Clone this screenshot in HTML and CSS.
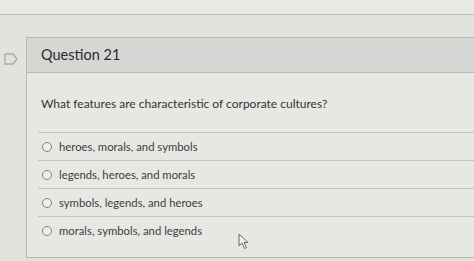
FILE: index.html
```html
<!DOCTYPE html>
<html lang="en">
  <head>
    <meta charset="UTF-8" />
    <title>Question 21</title>
    <link rel="stylesheet" href="styles.css">
  </head>
  <body>
    <div class="prev"></div>
    <div class="question-row">
      <div class="flag">
        <svg width="14" height="12" viewBox="0 0 14 12">
          <path d="M1 1 H9 L13 6 L9 11 H1 Z" fill="none" stroke="#a9aaa8" stroke-width="1.3" />
        </svg>
      </div>
      <div class="card">
        <div class="card-header">Question 21</div>
        <div class="card-body">
          <p class="question-text">What features are characteristic of corporate cultures?</p>
          <div class="answers">
            <label class="answer"><span class="radio"></span>heroes, morals, and symbols</label>
            <label class="answer"><span class="radio"></span>legends, heroes, and morals</label>
            <label class="answer"><span class="radio"></span>symbols, legends, and heroes</label>
            <label class="answer"><span class="radio"></span>morals, symbols, and legends
              <svg class="cursor" width="12" height="17" viewBox="0 0 12 17">
                <path d="M1 1 V13 L4 10 L6.5 15.5 L8.5 14.5 L6 9.5 H10 Z" fill="#eeeeec" stroke="#6d6e6c" stroke-width="1" />
              </svg>
            </label>
          </div>
        </div>
      </div>
    </div>
  </body>
</html>
```

FILE: styles.css
```css
body {
  font-family: Lato, "Open Sans", sans-serif;
  background-color: #e2e3df;
  color: #3a3b3a;
  margin: 0;
  padding: 0;
  overflow: hidden;
}
.prev {
  height: 14px;
  background-color: #e8e9e5;
  border-bottom: 1px solid #b9bab7;
}
.question-row {
  display: flex;
  margin-top: 22px;
}
.flag {
  width: 26px;
  padding-top: 12px;
  padding-left: 4px;
  box-sizing: border-box;
}
.card {
  flex: 1;
  border: 1px solid #b8b9b6;
  border-right: none;
  background-color: #e7e8e4;
  margin-right: -10px;
  height: 219px;
}
.card-header {
  height: 34px;
  background-color: #d6d7d4;
  border-bottom: 1px solid #b8b9b6;
  font-size: 14.5px;
  line-height: 34px;
  padding-left: 14px;
  color: #2a2b2a;
}
.card-body {
  padding: 22px 0 0 11px;
}
.question-text {
  margin: 0 0 19px 3px;
  font-size: 12px;
  line-height: 18px;
  color: #333433;
}
.answer {
  position: relative;
  display: flex;
  align-items: center;
  height: 27px;
  border-top: 1px solid #c6c7c4;
  font-size: 11.3px;
  color: #3d3e3d;
}
.radio {
  width: 8px;
  height: 8px;
  border: 1px solid #7f807e;
  border-radius: 50%;
  background: #f0f0ee;
  margin: 0 7px 0 4px;
}
.cursor {
  position: absolute;
  left: 200px;
  top: 16px;
}
```
